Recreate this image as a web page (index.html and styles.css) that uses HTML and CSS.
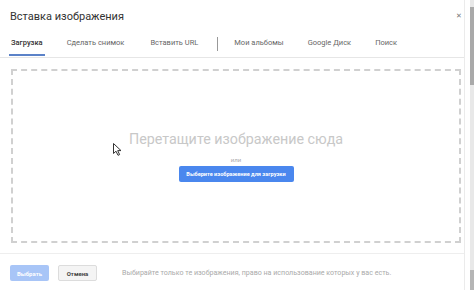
FILE: index.html
```html
<!DOCTYPE html>
<html lang="ru">
<head>
  <meta charset="UTF-8" />
  <meta name="viewport" content="width=device-width, initial-scale=1.0" />
  <title>Вставка изображения</title>
  <link rel="stylesheet" href="styles.css">
</head>
<body>
  <div class="dialog">
    <div class="header">
      <div class="title">Вставка изображения</div>
      <div class="close">&#x2715;</div>
    </div>
    <div class="tabs">
      <div class="tab active">Загрузка</div>
      <div class="tab">Сделать снимок</div>
      <div class="tab tab-url">Вставить URL</div>
      <div class="sep"></div>
      <div class="tab">Мои альбомы</div>
      <div class="tab">Google Диск</div>
      <div class="tab">Поиск</div>
    </div>
    <div class="content">
      <div class="dropzone">
        <div class="drop-title">Перетащите изображение сюда</div>
        <div class="or">или</div>
        <button class="btn-upload">Выберите изображение для загрузки</button>
      </div>
    </div>
    <div class="footer">
      <button class="btn btn-select">Выбрать</button>
      <button class="btn btn-cancel">Отмена</button>
      <div class="note">Выбирайте только те изображения, право на использование которых у вас есть.</div>
    </div>
  </div>
  <div class="scrollbar"><div class="thumb"></div><div class="grow"></div><div class="end"></div></div>

  <svg class="cursor" width="9" height="13" viewBox="0 0 9 13">
    <path d="M0.5 0.5 L0.5 10.5 L3 8.2 L5 12.3 L6.6 11.6 L4.7 7.6 L8 7.6 Z" fill="#fff" stroke="#333" stroke-width="1"/>
  </svg>
</body>
</html>
```
FILE: styles.css
```css
body {
  font-family: Roboto, "Liberation Sans", Arial, sans-serif;
  background: #fff;
  color: #333;
  margin: 0;
  width: 474px;
  height: 290px;
  overflow: hidden;
  display: flex;
  position: relative;
}
.dialog {
  width: 464px;
  border-right: 1px solid #ebebeb;
  display: flex;
  flex-direction: column;
}
.header {
  height: 30px;
  display: flex;
  align-items: center;
  justify-content: space-between;
  padding: 2px 0 0 10px;
  box-sizing: border-box;
}
.title {
  font-size: 11px;
  color: #333;
}
.close {
  font-size: 7px;
  color: #777;
  margin-right: 2px;
}
.tabs {
  height: 28px;
  display: flex;
  align-items: stretch;
  gap: 20px;
  padding-left: 9px;
  border-bottom: 1px solid #e6e6e6;
  box-sizing: border-box;
}
.tab {
  font-size: 7.5px;
  color: #666;
  padding: 0 2px;
  display: flex;
  align-items: center;
  border-bottom: 2px solid transparent;
  margin-bottom: 1px;
}
.tab.active {
  color: #333;
  font-weight: 500;
  border-bottom-color: #5b82c8;
}
.tab-url {
  margin-left: 2px;
}
.sep {
  width: 1px;
  background: #999;
  height: 14px;
  align-self: center;
  margin: 0 -6px 0 -3px;
}
.content {
  padding: 11px 3px 10px 11px;
  border-bottom: 1px solid #eee;
}
.dropzone {
  height: 174px;
  border: 2px dashed #d0d0d0;
  box-sizing: border-box;
  display: flex;
  flex-direction: column;
  align-items: center;
  padding-top: 59px;
}
.drop-title {
  font-size: 14.3px;
  color: #c8c8c8;
  line-height: 18px;
}
.or {
  font-size: 6px;
  color: #aaa;
  margin-top: 8px;
}
.btn-upload {
  margin-top: 3px;
  background: #4a87ee;
  color: #fff;
  border: none;
  border-radius: 2px;
  font-family: inherit;
  font-size: 5.6px;
  font-weight: bold;
  white-space: nowrap;
  height: 16px;
  width: 115px;
  padding: 0;
}
.footer {
  flex: 1;
  display: flex;
  align-items: flex-start;
  padding: 11px 0 0 10px;
}
.btn {
  height: 16px;
  width: 39px;
  border-radius: 2px;
  font-family: inherit;
  font-size: 6px;
  font-weight: bold;
  padding: 0;
}
.btn-select {
  background: #a8c5f7;
  color: #fff;
  border: none;
}
.btn-cancel {
  margin-left: 9px;
  background: #f4f4f4;
  color: #444;
  border: 1px solid #dcdcdc;
}
.note {
  margin-left: 25px;
  font-size: 7.1px;
  color: #aaa;
  line-height: 16px;
}
.scrollbar {
  margin-left: 5px;
  width: 4px;
  display: flex;
  flex-direction: column;
  background: #e8e8e8;
}
.thumb {
  margin-top: 7px;
  height: 78px;
  background: #a9a9a9;
}
.grow {
  flex: 1;
}
.end {
  height: 20px;
  background: #b5b5b5;
}
.cursor {
  position: absolute;
  left: 113px;
  top: 143px;
}
```
